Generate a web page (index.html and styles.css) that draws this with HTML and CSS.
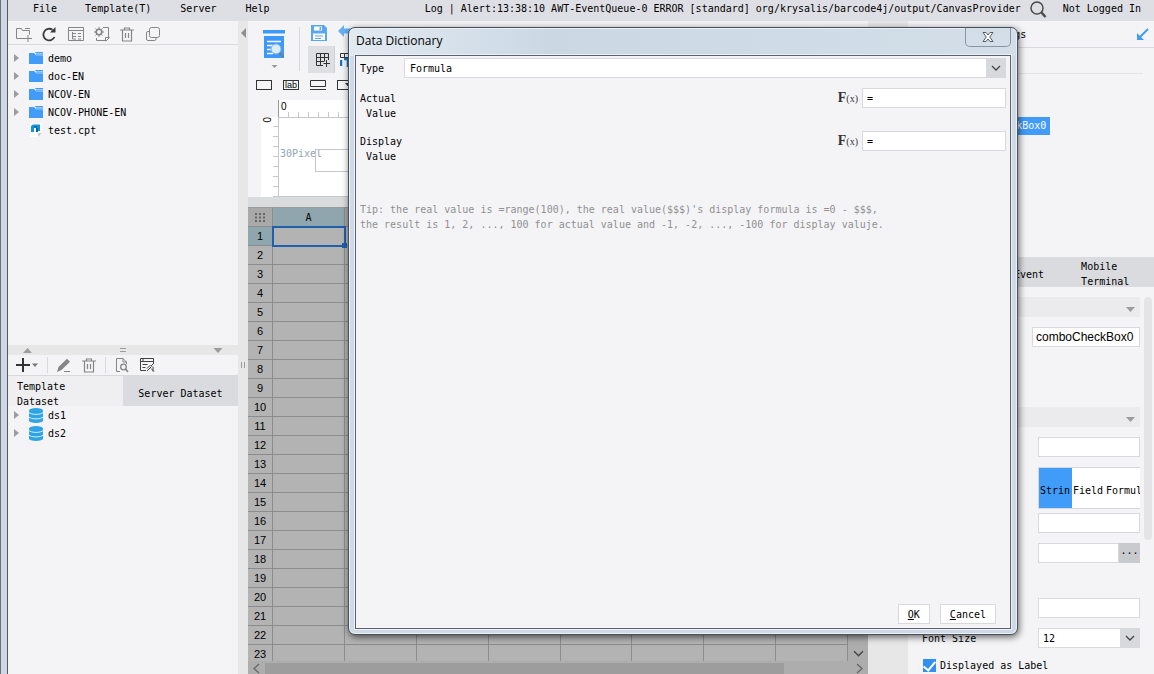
FILE: index.html
```
<!DOCTYPE html>
<html lang="en">

<head>
    <meta charset="UTF-8">
    <title>Report Designer</title>
    <link rel="stylesheet" href="styles.css">
</head>

<body>
    <svg class="symbols" width="0" height="0">
        <symbol id="arrow" viewBox="0 0 5 8"><path d="M0 0l5 4-5 4z" fill="#9c9c9e" /></symbol>
        <symbol id="down" viewBox="0 0 9 5"><path d="M0 0h9L4.500 5z" fill="#9c9c9e" /></symbol>
        <symbol id="chevron" viewBox="0 0 10 6"><path d="M1 1l4 4 4-4" fill="none" stroke="#444" stroke-width="1.300" /></symbol>
        <symbol id="folder" viewBox="0 0 14 12"><path d="M0 1h5l1 1h8v10H0z" fill="#419bf9" /><path d="M6 0h8v1.500H7z" fill="#419bf9" /><path d="M6 2l1 1h7" fill="none" stroke="#bfe0ff" stroke-width=".8" /></symbol>
        <symbol id="db" viewBox="0 0 14 15"><path d="M0 3v9.500a7 2.500 0 0 0 14 0V3z" fill="#2fa4e4" /><ellipse cx="7" cy="2.700" rx="7" ry="2.700" fill="#2fa4e4" /><path d="M0 4.500c2 2.500 12 2.500 14 0M0 9c2 2.500 12 2.500 14 0" fill="none" stroke="#d5f0ff" /></symbol>
        <symbol id="trash" viewBox="0 0 14 15"><path d="M0 3h14M4.500 3V1h5v2M2.500 3v11h9V3M5.500 6v5M8.500 6v5" fill="none" stroke="#858585" stroke-width="1.200" /></symbol>
    </svg>

    <div class="edge"></div>
    <div class="app">
        <nav class="menu">
            <button class="file">File</button>
            <button class="template">Template(T)</button>
            <button class="server">Server</button>
            <button>Help</button>
            <p class="log">Log | Alert:13:38:10 AWT-EventQueue-0 ERROR [standard] org/krysalis/barcode4j/output/CanvasProvider</p>
            <button class="search" aria-label="Search">
                <svg width="17" height="18" viewBox="0 0 17 18" fill="none" stroke="#4a4a4a"><circle cx="7" cy="7" r="6" stroke-width="1.500" /><path d="M11.500 11.500l4 4.500" stroke-width="2.500" /></svg>
            </button>
            <a class="login" href="#">Not Logged In</a>
        </nav>

        <main>
            <aside class="left">
                <section class="files">
                    <div class="tools filetools">
                        <button aria-label="New folder"><svg width="16" height="15" viewBox="0 0 16 15" fill="none" stroke="#858585"><path d="M9 11.500H.5v-10h5l1 2h7v4M9 1.500h5M12 8v7M8.500 11.500H16" /></svg></button>
                        <button aria-label="Refresh"><svg width="16" height="15" viewBox="0 0 16 15"><path d="M10.500 2.800A5.800 5.800 0 1 0 12.500 10" fill="none" stroke="#3a3a3a" stroke-width="1.800" /><path d="M13.500 0v5.500H8z" fill="#3a3a3a" /></svg></button>
                        <button aria-label="Show path"><svg width="16" height="15" viewBox="0 0 16 15" fill="none" stroke="#858585"><path d="M.5.500h15v13H.5zM.5 3.500h15M4.500 5v7M4.500 6.500H8M4.500 9.500H8M4.500 12H8M10 6.500h3M10 9.500h3M10 12h3" /></svg></button>
                        <button aria-label="Settings"><svg width="16" height="15" viewBox="0 0 16 15" fill="none" stroke="#858585"><circle cx="5" cy="5" r="2.800" stroke-width="1.600" /><path d="M5 0v2M5 8v2M0 5h2M8 5h2M1.500 1.500l1.300 1.300M7.200 7.200l1.300 1.300M8.500 1.500L7.200 2.800M1.500 8.500l1.300-1.300M9 .5h5.500V10M2.500 11v2.500H11M11.500 14v-3.500h4L12 14z" /></svg></button>
                        <button aria-label="Delete"><svg width="14" height="15"><use href="#trash" /></svg></button>
                        <button aria-label="Copy"><svg width="14" height="15" viewBox="0 0 14 15" fill="none" stroke="#858585"><rect x="3.500" y=".5" width="10" height="10" rx="2" /><path d="M3 4.500H2a1.500 1.500 0 0 0-1.500 1.500v6A1.500 1.500 0 0 0 2 13.500h6.500A1.500 1.500 0 0 0 10 12v-1" /></svg></button>
                    </div>
                    <ul class="tree">
                        <li><svg class="open" width="5" height="8"><use href="#arrow" /></svg><svg class="icon" width="14" height="12"><use href="#folder" /></svg>demo</li>
                        <li><svg class="open" width="5" height="8"><use href="#arrow" /></svg><svg class="icon" width="14" height="12"><use href="#folder" /></svg>doc-EN</li>
                        <li><svg class="open" width="5" height="8"><use href="#arrow" /></svg><svg class="icon" width="14" height="12"><use href="#folder" /></svg>NCOV-EN</li>
                        <li><svg class="open" width="5" height="8"><use href="#arrow" /></svg><svg class="icon" width="14" height="12"><use href="#folder" /></svg>NCOV-PHONE-EN</li>
                        <li><span class="open blank"></span><svg class="icon" width="14" height="14" viewBox="0 0 14 14"><path d="M1 0h12v10l-4 4H1z" fill="#fff" /><path d="M9 10h4l-4 4z" fill="#c9c9cb" /><path d="M2 9V3l2-1.500h7V8H7V5H5v4z" fill="#1296db" /><path d="M5 3h3v1.500H5zM7 5h2v4H7z" fill="#0b62ad" /></svg>test.cpt</li>
                    </ul>
                </section>
                <div class="splitter">
                    <svg width="9" height="5" viewBox="0 0 9 5"><path d="M0 5h9L4.500 0z" fill="#9c9c9e" /></svg>
                    <svg width="6" height="4" viewBox="0 0 6 4"><path d="M0 .5h6M0 3.500h6" stroke="#9c9c9e" /></svg>
                    <svg width="10" height="5"><use href="#down" /></svg>
                </div>
                <section class="datasets">
                    <div class="tools datatools">
                        <button class="add" aria-label="Add"><svg width="22" height="14" viewBox="0 0 22 14"><path d="M7 0v14M0 7h14" stroke="#333" stroke-width="2" /><path d="M16 5.500h6L19 9z" fill="#777" /></svg></button>
                        <i></i>
                        <button class="edit" aria-label="Edit"><svg width="15" height="14" viewBox="0 0 15 14"><path d="M0 14l1.500-5L10 .8 13 3.800 4.500 12zM7 13h6v1H7z" fill="#858585" /></svg></button>
                        <button aria-label="Delete"><svg width="14" height="15"><use href="#trash" /></svg></button>
                        <i></i>
                        <button class="preview" aria-label="Preview"><svg width="14" height="15" viewBox="0 0 14 15" fill="none" stroke="#858585"><path d="M5 13.500H1.500v-13H8L11.500 4v2M8 .5V4h3.500" /><circle cx="8.500" cy="9" r="2.800" stroke-width="1.300" /><path d="M10.500 11l2.500 3" stroke-width="1.600" /></svg></button>
                        <button aria-label="Connection"><svg width="15" height="14" viewBox="0 0 15 14" fill="none" stroke="#444"><path d="M6 12.500H.5V.5h13V6M.5 3.500h13M2.500 6.500h5M2.500 9.500h3M2 2h2" /><path d="M7 10.500l3.500-3.500M8 12l3.500-3.500M7 13l1.500-1.500M11 8l2.500-2.500M11 10.500l3 3M13 8.500v5" /></svg></button>
                    </div>
                    <div class="tabs">
                        <button class="valgt">Template Dataset</button>
                        <button>Server Dataset</button>
                    </div>
                    <ul class="tree">
                        <li><svg class="open" width="5" height="8"><use href="#arrow" /></svg><svg class="icon" width="14" height="15"><use href="#db" /></svg>ds1</li>
                        <li><svg class="open" width="5" height="8"><use href="#arrow" /></svg><svg class="icon" width="14" height="15"><use href="#db" /></svg>ds2</li>
                    </ul>
                </section>
            </aside>

            <div class="divider">
                <svg width="5" height="10" viewBox="0 0 5 10"><path d="M5 0v10L0 5z" fill="#8f8f8f" /></svg>
                <svg class="grip" width="4" height="6" viewBox="0 0 4 6"><path d="M.5 0v6M3.500 0v6" stroke="#9c9c9e" /></svg>
            </div>

            <section class="center">
                <div class="toolbar">
                    <button class="big" aria-label="Preview report">
                        <svg width="22" height="38" viewBox="0 0 22 38"><path d="M0 0h22v3.500H0zM1 6h20v22H1z" fill="#3b99fc" /><path d="M4 11.500h14M4 15.500h6M4 19.500h4M4 23.500h6" stroke="#fff" stroke-width="1.500" /><circle cx="13" cy="19" r="5" fill="#d9edff" stroke="#8bb0d0" /><path d="M16.500 23l4 4" stroke="#687f94" stroke-width="2" /><path d="M8.500 35h6l-3 3z" fill="#999" /></svg>
                    </button>
                    <div class="actions">
                        <div class="row">
                            <button aria-label="Save"><svg width="16" height="16" viewBox="0 0 16 16"><path d="M0 0h13l3 3v13H0z" fill="#5aa7ef" /><path d="M3 1.500h8v4H3zM2 8.500h12V15H2z" fill="#fff" /><path d="M8.500 2h1.500v3H8.500zM4 10.500h8v1H4zM4 13h6v1H4z" fill="#5aa7ef" /></svg></button>
                            <button aria-label="Undo"><svg width="16" height="12" viewBox="0 0 16 12"><path d="M0 6l6-6v3.500h10v5H6V12z" fill="#64b0f3" /></svg></button>
                        </div>
                        <div class="row">
                            <button class="cell" aria-label="Insert cells"><svg width="14" height="14" viewBox="0 0 14 14" fill="none" stroke="#333"><path d="M12.500 7V.5H.5v12H7M.5 4.500h12M.5 8.500H8M4.500.5v12M8.500.5v8M7.500 10.500H14M10.500 7v7" /></svg></button>
                            <button class="cell plain" aria-label="Insert chart"><svg width="14" height="14" viewBox="0 0 14 14"><path d="M.5.500h12v4H.5zM4.500.5v4M8.500.5v4" fill="none" stroke="#333" /><path d="M1 7v6M4 6h4v8" fill="none" stroke="#1673c5" stroke-width="2.500" /></svg></button>
                        </div>
                    </div>
                </div>
                <div class="widgets">
                    <svg width="16" height="10"><rect x=".5" y=".5" width="15" height="9" fill="none" stroke="#333" /></svg>
                    <span class="lab">lab</span>
                    <svg width="16" height="10"><path d="M.5.500h15v6H.5zM0 9.500h16" fill="none" stroke="#333" /></svg>
                    <svg width="16" height="10"><rect x=".5" y=".5" width="15" height="9" fill="none" stroke="#333" /><path d="M8 3h5l-2.500 3z" fill="#333" /></svg>
                </div>
                <div class="canvas">
                    <div class="ruler"><span>0</span></div>
                    <div class="side"><span>0</span></div>
                    <div class="paper"><span>30Pixel</span></div>
                </div>
                <div class="sheet">
                    <table>
                        <thead>
                            <tr>
                                <th class="corner"><svg width="11" height="9" viewBox="0 0 11 9"><path d="M0 1h11M0 4.500h11M0 8h11" stroke="#666" stroke-width="2" stroke-dasharray="2 2" /></svg></th>
                                <th class="valgt">A</th>
                                <th></th>
                                <th></th>
                                <th></th>
                                <th></th>
                                <th></th>
                                <th></th>
                                <th></th>
                            </tr>
                        </thead>
                        <tbody></tbody>
                    </table>
                    <div class="vbar"><svg width="11" height="7"><use href="#chevron" /></svg></div>
                </div>
                <div class="hbar">
                    <svg width="7" height="11" viewBox="0 0 7 11"><path d="M6 1L1 5.500 6 10" fill="none" stroke="#666" stroke-width="1.300" /></svg>
                    <div class="thumb"></div>
                    <svg width="7" height="11" viewBox="0 0 7 11"><path d="M1 1l5 4.500L1 10" fill="none" stroke="#666" stroke-width="1.300" /></svg>
                </div>
            </section>

            <div class="divider wide"></div>

            <aside class="right">
                <header>
                    <h2>Widget Settings</h2>
                    <svg width="12" height="12" viewBox="0 0 12 12"><path d="M11 1L3 9" stroke="#419bf9" stroke-width="2" /><path d="M0 5v7h7z" fill="#419bf9" /></svg>
                </header>
                <div class="outline"><span>comboCheckBox0</span></div>
                <div class="proptabs">
                    <button class="event">Event</button>
                    <button class="mobile">Mobile Terminal</button>
                </div>
                <div class="props">
                    <form>
                        <div class="bar"><svg width="9" height="5"><use href="#down" /></svg></div>
                        <input class="name" aria-label="Widget name" value="comboCheckBox0">
                        <div class="bar second"><svg width="9" height="5"><use href="#down" /></svg></div>
                        <input aria-label="Label name">
                        <div class="segment">
                            <button type="button" class="valgt">Strin</button>
                            <button type="button">Field</button>
                            <button type="button">Formul</button>
                        </div>
                        <input aria-label="Widget value">
                        <div class="browse">
                            <input aria-label="Data dictionary">
                            <button type="button">···</button>
                        </div>
                        <input class="water" aria-label="Watermark">
                        <div class="size">
                            <label for="size">Font Size</label>
                            <span class="drop">
                                <select id="size"><option>12</option></select>
                                <svg width="10" height="6"><use href="#chevron" /></svg>
                            </span>
                        </div>
                        <label class="check"><input type="checkbox" checked>Displayed as Label</label>
                    </form>
                    <div class="scroll"></div>
                </div>
            </aside>
        </main>
    </div>

    <section class="dialog" role="dialog" aria-labelledby="title">
        <header>
            <h1 id="title">Data Dictionary</h1>
            <button aria-label="Close"><svg width="12" height="10" viewBox="0 0 12 10"><path d="M1 .5h3l2 2.500 2-2.500h3L7.700 5 11 9.500H8L6 7 4 9.500H1L4.300 5z" fill="#fff" stroke="#555b66" /></svg></button>
        </header>
        <form class="content">
            <div class="type">
                <label for="type">Type</label>
                <span class="drop">
                    <select id="type"><option>Formula</option></select>
                    <svg width="10" height="6"><use href="#chevron" /></svg>
                </span>
            </div>
            <div class="value">
                <label for="actual">Actual
 Value</label>
                <span class="fx">F<small>(x)</small></span>
                <input id="actual" value="=">
            </div>
            <div class="value">
                <label for="display">Display
 Value</label>
                <span class="fx">F<small>(x)</small></span>
                <input id="display" value="=">
            </div>
            <p class="tip">Tip: the real value is =range(100), the real value($$$)'s display formula is =0 - $$$,<br>the result is 1, 2, ..., 100 for actual value and -1, -2, ..., -100 for display valuje.</p>
            <footer>
                <button type="button"><u>O</u>K</button>
                <button type="button"><u>C</u>ancel</button>
            </footer>
        </form>
    </section>

    <script src="script.js"></script>
</body>

</html>
```
FILE: styles.css
```
* {
    box-sizing: border-box;
}

body {
    margin: 0;
    height: 100vh;
    display: flex;
    overflow: hidden;
    background-color: #f4f4f7;
    color: #000;
    font: 10px/15px "DejaVu Sans Mono", "Liberation Mono", monospace;
}

button,
input,
select {
    font: inherit;
    color: inherit;
    border: 0;
    padding: 0;
    margin: 0;
    background: none;
    border-radius: 0;
}

input,
select {
    background-color: #fff;
    border: 1px solid #d8d9dd;
    height: 20px;
    min-width: 0;
}

svg {
    display: block;
    flex: none;
}

h1,
h2,
p,
ul {
    margin: 0;
    padding: 0;
    font-size: inherit;
    font-weight: normal;
}

.symbols {
    position: absolute;
}

.edge {
    width: 8px;
    flex: none;
    background-color: #cfd8e5;
    border-left: 1px solid #6b6f78;
    border-right: 1px solid #555a63;
}

.app {
    flex: 1;
    min-width: 0;
    display: flex;
    flex-direction: column;
}

/* menu */
.menu {
    height: 21px;
    flex: none;
    display: flex;
    align-items: center;
    padding: 0 13px 4px 25px;
    background-color: #dedfe4;
    white-space: nowrap;
}

.file {
    margin-right: 28px;
}

.template {
    margin-right: 29px;
}

.server {
    margin-right: 29px;
}

.log {
    margin-left: auto;
}

.search {
    margin: 3px 16px 0 9px;
}

.login {
    color: #000;
    text-decoration: none;
}

main {
    flex: 1;
    min-height: 0;
    display: flex;
}

/* left side */
.left {
    width: 230px;
    flex: none;
    display: flex;
    flex-direction: column;
}

.files {
    flex: 324 1 0;
}

.datasets {
    flex: 319 1 0;
}

.tools {
    display: flex;
    align-items: center;
    border-bottom: 1px solid #d8d9dd;
}

.tools i {
    width: 1px;
    height: 16px;
    background-color: #d8d9dd;
}

.filetools {
    height: 24px;
    padding: 3px 8px 0;
    gap: 10px;
}

.filetools button {
    width: 16px;
}

.datatools {
    height: 21px;
    padding-left: 8px;
    gap: 9px;
}

.datatools .edit {
    margin-right: 1px;
}

.datatools .preview {
    margin-right: 2px;
}

.tree {
    list-style: none;
    padding: 4px 0 0 6px;
}

.datasets .tree {
    padding-top: 0;
}

.tree li {
    display: flex;
    align-items: center;
    height: 18px;
}

.open {
    width: 5px;
    margin-right: 10px;
}

.icon {
    margin-right: 5px;
}

.splitter {
    height: 10px;
    padding: 0 15px;
    display: flex;
    align-items: center;
    justify-content: space-between;
    background-color: #e7e7e8;
}

.tabs {
    display: flex;
    height: 30px;
}

.tabs button {
    width: 50%;
    background-color: #dadbdf;
    padding-top: 4px;
}

.tabs .valgt {
    background-color: #efeff2;
    text-align: left;
    padding: 3px 40px 0 9px;
}

.divider {
    width: 10px;
    flex: none;
    padding: 7px 3px;
    background-color: #e7e7e7;
}

.grip {
    margin-top: 324px;
}

.wide {
    width: 40px;
}

/* report area */
.center {
    flex: 1;
    min-width: 0;
    overflow: hidden;
    display: flex;
    flex-direction: column;
    background-color: #f4f4f7;
}

.toolbar {
    display: flex;
    height: 52px;
    padding: 4px 0 0 15px;
}

.big {
    width: 37px;
    height: 44px;
    margin: 2px 8px 0 0;
    border-right: 1px solid #d8d9dd;
}

.row {
    display: flex;
    gap: 11px;
    padding-left: 3px;
    height: 21px;
    align-items: flex-start;
}

.row + .row {
    gap: 0;
    padding: 0;
    height: 27px;
}

.cell {
    width: 27px;
    height: 27px;
    padding-left: 8px;
    background-color: #dedfe3;
    border-right: 1px solid #cfd0d4;
}

.plain {
    padding-left: 5px;
    background: none;
}

.widgets {
    display: flex;
    gap: 11px;
    height: 27px;
    padding: 7px 8px 0;
}

.lab {
    width: 16px;
    height: 10px;
    border: 1px solid #333;
    text-align: center;
    font: 9px/8px "Liberation Sans", sans-serif;
}

.canvas {
    display: grid;
    grid-template: 17px 80px / 17px 1fr;
    padding-left: 13px;
    border-bottom: 10px solid #dadbdd;
}

.ruler {
    grid-column: 2;
    border-left: 1px solid #999;
    padding-left: 2px;
    font: 10px/13px "Liberation Sans", sans-serif;
    background: repeating-linear-gradient(90deg, transparent 0 9px, #c9c9cc 9px 10px) bottom / 100% 5px no-repeat #fff;
}

.side {
    background: repeating-linear-gradient(transparent 0 9px, #c9c9cc 9px 10px) right / 5px 100% no-repeat #fff;
    font: 10px/10px "Liberation Sans", sans-serif;
}

.side span {
    display: block;
    writing-mode: vertical-rl;
}

.paper {
    background-color: #fff;
    border: 1px solid #c5c6ca;
    border-right: 0;
    padding: 28px 0 0 1px;
    display: flex;
    align-items: flex-start;
    color: #8fa5b5;
}

/* the label is drawn over the left part of the widget box */
.paper::after {
    content: "";
    flex: 1;
    height: 21px;
    margin: 3px 0 0 -7px;
    border: 1px solid #c5c6ca;
}

.sheet {
    flex: 1;
    min-height: 0;
    overflow: hidden;
    display: flex;
    background-color: #b3b3b3;
}

table {
    flex: 1;
    width: 100%;
    height: 100%;
    table-layout: fixed;
    border-collapse: separate;
    border-spacing: 0;
}

tr {
    height: 19px;
}

th,
td {
    padding: 0;
    border-right: 1px solid #8c8c8c;
    border-bottom: 1px solid #8c8c8c;
    font-weight: normal;
}

thead th {
    height: 20px;
    background-color: #a9a9a9;
    border-top: 1px solid #9a9a9a;
}

tbody th {
    font: 11px/18px "Liberation Sans", sans-serif;
}

.corner {
    width: 25px;
}

.corner svg {
    margin: 0 auto;
}

th.valgt {
    background-color: #8fa6ae;
}

td.valgt {
    position: relative;
    outline: 2px solid #1f5fae;
    outline-offset: -1px;
}

td.valgt::after {
    content: "";
    position: absolute;
    right: -3px;
    bottom: -3px;
    width: 5px;
    height: 5px;
    background-color: #1f5fae;
}

.vbar {
    width: 20px;
    flex: none;
    display: flex;
    align-items: flex-end;
    justify-content: center;
    padding-bottom: 4px;
    background-color: #adadad;
}

.hbar {
    height: 13px;
    display: flex;
    align-items: center;
    justify-content: space-between;
    padding: 2px 5px 0;
    background-color: #adadad;
}

.thumb {
    width: 85%;
    height: 11px;
    margin: 0 auto 0 5px;
    background-color: #9d9d9d;
}

/* right side */
.right {
    width: 246px;
    flex: none;
    display: flex;
    flex-direction: column;
}

.right header {
    display: flex;
    align-items: center;
    justify-content: space-between;
    height: 27px;
    padding: 0 5px 0 28px;
    border-bottom: 1px solid #d8d9dd;
}

.outline {
    height: 184px;
    margin: 25px 11px 0 0;
    padding: 43px 0 0 52px;
    border-top: 1px solid #e3e3e6;
}

.outline span {
    display: inline-block;
    padding: 0 4px 0 2px;
    background-color: #419bf9;
    color: #fff;
    line-height: 18px;
}

.proptabs {
    display: flex;
    height: 30px;
    flex: none;
    padding-left: 106px;
    background-color: #dadbdf;
}

.event {
    padding-top: 4px;
}

.mobile {
    width: 60px;
    margin-left: 37px;
    padding-top: 2px;
    text-align: left;
}

.props {
    flex: 1;
    min-height: 0;
    display: flex;
    align-items: flex-start;
    gap: 4px;
    padding: 10px 2px 0 10px;
}

.props form {
    flex: 1;
    display: flex;
    flex-direction: column;
    align-items: flex-end;
}

.scroll {
    width: 8px;
    height: 243px;
    border-radius: 4px;
    background-color: #e4e4e6;
}

.bar {
    width: 100%;
    height: 20px;
    margin-bottom: 10px;
    padding: 10px 5px 0 0;
    background-color: #ebebed;
}

.bar svg {
    margin-left: auto;
}

.second {
    margin-top: 60px;
}

.props input,
.segment,
.browse {
    width: 102px;
}

.props .name {
    width: 108px;
    padding: 0 3px;
    font: 12px "Liberation Sans", sans-serif;
}

.segment {
    display: flex;
    height: 42px;
    margin: 10px 0 4px;
    overflow: hidden;
    background-color: #fff;
    border: 1px solid #d8d9dd;
    border-right: 0;
}

.segment button {
    flex: none;
    width: 33px;
    padding: 5px 0 0 1px;
    text-align: left;
}

.segment .valgt {
    background-color: #419bf9;
}

.browse {
    display: flex;
    height: 20px;
    margin: 10px 0 35px;
}

.browse input {
    flex: 1;
}

.browse button {
    width: 21px;
    background-color: #c9cacd;
}

.size {
    display: flex;
    align-self: stretch;
    justify-content: space-between;
    align-items: center;
    margin: 10px 0;
    padding-left: 4px;
}

.size .drop {
    width: 102px;
}

.drop {
    position: relative;
    display: flex;
}

.drop select {
    flex: 1;
    appearance: none;
    padding: 0 24px 0 4px;
    border-right: 20px solid #d8d9dd;
}

.drop svg {
    position: absolute;
    right: 5px;
    top: 7px;
    pointer-events: none;
}

.check {
    display: flex;
    align-items: center;
    align-self: stretch;
    gap: 4px;
    padding-left: 5px;
}

.props .check input {
    appearance: none;
    display: flex;
    justify-content: center;
    width: 13px;
    height: 13px;
    border: 0;
    background-color: #3290f3;
}

.check input:checked::after {
    content: "";
    width: 5px;
    height: 10px;
    border: solid #fff;
    border-width: 0 2px 2px 0;
    transform: rotate(40deg);
}

/* dialog window */
.dialog {
    position: absolute;
    left: 348px;
    right: 136px;
    top: 27px;
    bottom: 39px;
    display: flex;
    flex-direction: column;
    padding: 0 6px 5px;
    background: linear-gradient(90deg, #e2eaf1, #cbd8e4 30%, #d3dee8) top / 100% 28px no-repeat #cfdae6;
    border: 1px solid #4b515b;
    border-radius: 7px;
    box-shadow: 1px 2px 7px rgba(0, 0, 0, .6), inset 0 0 0 1px #e9f0f6;
}

.dialog header {
    display: flex;
    justify-content: space-between;
    height: 27px;
    flex: none;
}

.dialog h1 {
    padding-left: 1px;
    font: 12px/26px "Open Sans", "Noto Sans", sans-serif;
}

.dialog header button {
    width: 46px;
    height: 19px;
    display: flex;
    align-items: center;
    justify-content: center;
    border: 1px solid #8a95a3;
    border-top: 0;
    border-radius: 0 0 5px 5px;
    background-color: #d3dee8;
}

.content {
    flex: 1;
    min-height: 0;
    display: flex;
    flex-direction: column;
    padding: 2px 4px 4px;
    background-color: #f4f4f7;
    border: 1px solid #5c626e;
    outline: 1px solid #e9f0f6;
}

.type {
    display: flex;
    align-items: center;
    margin-bottom: 10px;
}

.type label {
    width: 44px;
}

.type .drop {
    flex: 1;
}

.type select {
    padding-left: 5px;
}

.value {
    display: flex;
    align-items: flex-start;
    margin-bottom: 10px;
}

.value label {
    flex: 1;
    height: 33px;
    padding-top: 3px;
    white-space: pre;
}

.value input {
    width: 144px;
    padding: 0 4px;
}

.fx {
    margin-right: 4px;
    color: #333;
    font: bold 14px/20px "Liberation Serif", serif;
}

.fx small {
    font-size: 10px;
    font-weight: normal;
}

.tip {
    margin: 28px 0 auto;
    color: #909090;
    white-space: nowrap;
}

.dialog footer {
    display: flex;
    justify-content: flex-end;
    gap: 10px;
    padding-right: 10px;
}

.dialog footer button {
    height: 20px;
    padding: 0 9px;
    background-color: #fff;
    border: 1px solid #d8d9dd;
}
```
FILE: script.js
```
const body = document.querySelector("tbody");

for (let i = 1; i <= 23; i++) {
    const row = body.insertRow();
    const head = document.createElement("th");
    head.textContent = i;
    row.appendChild(head);

    for (let k = 0; k < 8; k++) {
        row.insertCell();
    }

    if (i == 1) {
        head.classList.add("valgt");
        row.cells[1].classList.add("valgt");
    }
}
```
